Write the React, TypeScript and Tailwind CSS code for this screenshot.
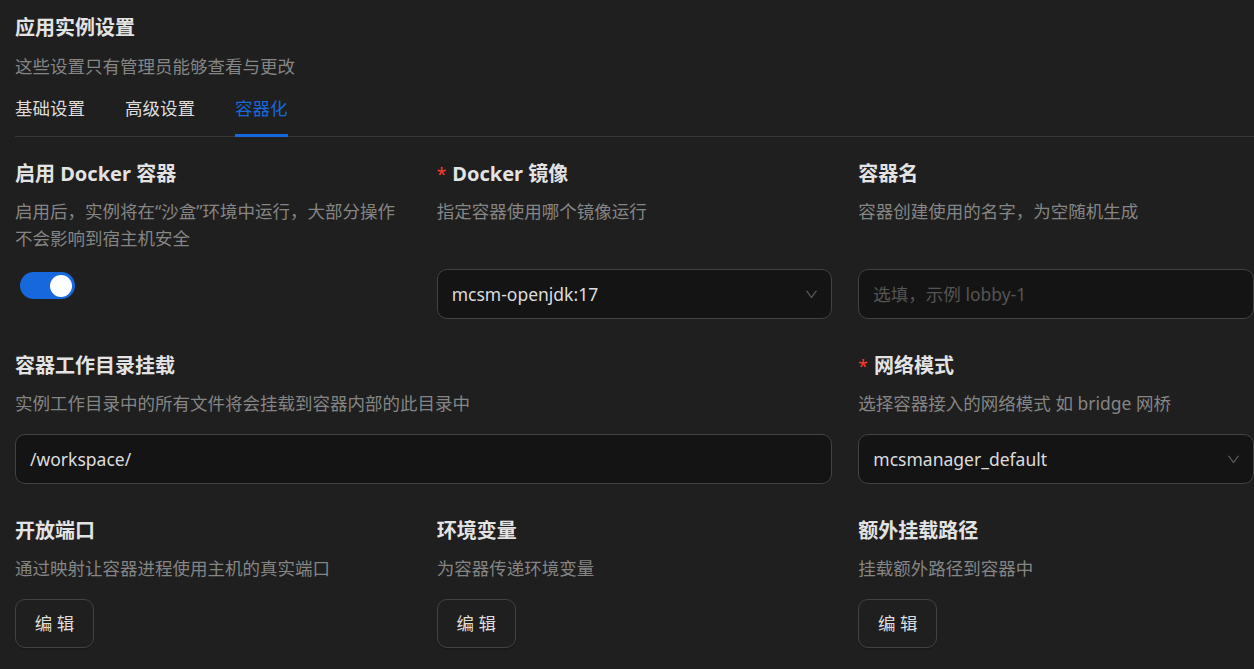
import React from "react";

const FONT = { fontFamily: '"Noto Sans", "Noto Sans CJK SC", sans-serif' };

function Chevron() {
  return (
    <svg width="15" height="15" viewBox="0 0 1024 1024" fill="#5a5a5a" aria-hidden>
      <path d="M884 256h-75c-5.1 0-9.9 2.5-12.9 6.6L512 654.2 227.9 262.6c-3-4.1-7.8-6.6-12.9-6.6h-75c-6.5 0-10.3 7.4-6.5 12.7l352.6 486.1c12.8 17.6 39 17.6 51.7 0l352.6-486.1c3.9-5.3.1-12.7-6.4-12.7z" />
    </svg>
  );
}

function Label({ children, required }: { children: React.ReactNode; required?: boolean }) {
  return (
    <div className="flex items-center text-[20px] leading-[28px] font-bold text-[#e3e3e3]">
      {required && <span className="mr-[6px] text-[17.5px] font-normal text-[#ff3b30]">*</span>}
      <span>{children}</span>
    </div>
  );
}

function Desc({ children, className = "" }: { children: React.ReactNode; className?: string }) {
  return <div className={`mt-[10px] text-[17.5px] leading-[27px] text-[#858585] ${className}`}>{children}</div>;
}

function Select({ value }: { value: string }) {
  return (
    <div className="flex h-[50px] items-center justify-between rounded-[10px] border border-[#424242] bg-[#141414] pl-[14px] pr-[12px] text-[17.5px] text-[#dddddd]">
      <span>{value}</span>
      <Chevron />
    </div>
  );
}

function Input({ value, placeholder }: { value?: string; placeholder?: string }) {
  return (
    <div className="flex h-[50px] items-center rounded-[10px] border border-[#424242] bg-[#141414] px-[14px] text-[17.5px]">
      {value ? <span className="text-[#dddddd]">{value}</span> : <span className="text-[#555555]">{placeholder}</span>}
    </div>
  );
}

function EditButton() {
  return (
    <button className="flex h-[49px] w-[79px] items-center justify-center rounded-[10px] border border-[#424242] bg-transparent text-[17.5px] text-[#dddddd] shadow-[0_2px_0_rgba(0,0,0,0.15)]">
      编 辑
    </button>
  );
}

export default function App() {
  return (
    <div className="min-h-[669px] w-[1254px] overflow-hidden bg-[#1f1f1f] pl-[15px] pt-[14px]" style={FONT}>
      <div className="text-[20px] leading-[28px] font-bold text-[#e3e3e3]">应用实例设置</div>
      <div className="mt-[11px] text-[17.5px] leading-[26px] text-[#858585]">这些设置只有管理员能够查看与更改</div>

      <div className="flex gap-[40px] border-b border-[#363636] text-[17.5px] leading-[28px]">
        <div className="pt-[15px] pb-[14px] text-[#dddddd]">基础设置</div>
        <div className="pt-[15px] pb-[14px] text-[#dddddd]">高级设置</div>
        <div className="relative pt-[15px] pb-[14px] text-[#1668dc]">
          容器化
          <div className="absolute bottom-[-1px] left-0 right-0 h-[3px] bg-[#1668dc]" />
        </div>
      </div>

      <div className="mt-[23px] grid grid-cols-3 gap-x-[26px] gap-y-[33px]">
        <div className="flex flex-col">
          <Label>启用 Docker 容器</Label>
          <Desc className="min-h-[54px]">
            启用后，实例将在“沙盒”环境中运行，大部分操作
            <br />
            不会影响到宿主机安全
          </Desc>
          <div className="mt-[20px] ml-[5px] flex h-[27px] w-[55px] items-center justify-end rounded-full bg-[#1668dc] pr-[3px]">
            <div className="h-[22px] w-[22px] rounded-full bg-white" />
          </div>
        </div>
        <div className="flex flex-col">
          <Label required>Docker 镜像</Label>
          <Desc className="min-h-[54px]">指定容器使用哪个镜像运行</Desc>
          <div className="mt-[17px]">
            <Select value="mcsm-openjdk:17" />
          </div>
        </div>
        <div className="flex flex-col">
          <Label>容器名</Label>
          <Desc className="min-h-[54px]">容器创建使用的名字，为空随机生成</Desc>
          <div className="mt-[17px]">
            <Input placeholder="选填，示例 lobby-1" />
          </div>
        </div>

        <div className="col-span-2 flex flex-col">
          <Label>容器工作目录挂载</Label>
          <Desc>实例工作目录中的所有文件将会挂载到容器内部的此目录中</Desc>
          <div className="mt-[17px]">
            <Input value="/workspace/" />
          </div>
        </div>
        <div className="flex flex-col">
          <Label required>网络模式</Label>
          <Desc>选择容器接入的网络模式 如 bridge 网桥</Desc>
          <div className="mt-[17px]">
            <Select value="mcsmanager_default" />
          </div>
        </div>

        <div className="flex flex-col">
          <Label>开放端口</Label>
          <Desc>通过映射让容器进程使用主机的真实端口</Desc>
          <div className="mt-[17px]">
            <EditButton />
          </div>
        </div>
        <div className="flex flex-col">
          <Label>环境变量</Label>
          <Desc>为容器传递环境变量</Desc>
          <div className="mt-[17px]">
            <EditButton />
          </div>
        </div>
        <div className="flex flex-col">
          <Label>额外挂载路径</Label>
          <Desc>挂载额外路径到容器中</Desc>
          <div className="mt-[17px]">
            <EditButton />
          </div>
        </div>
      </div>
    </div>
  );
}
